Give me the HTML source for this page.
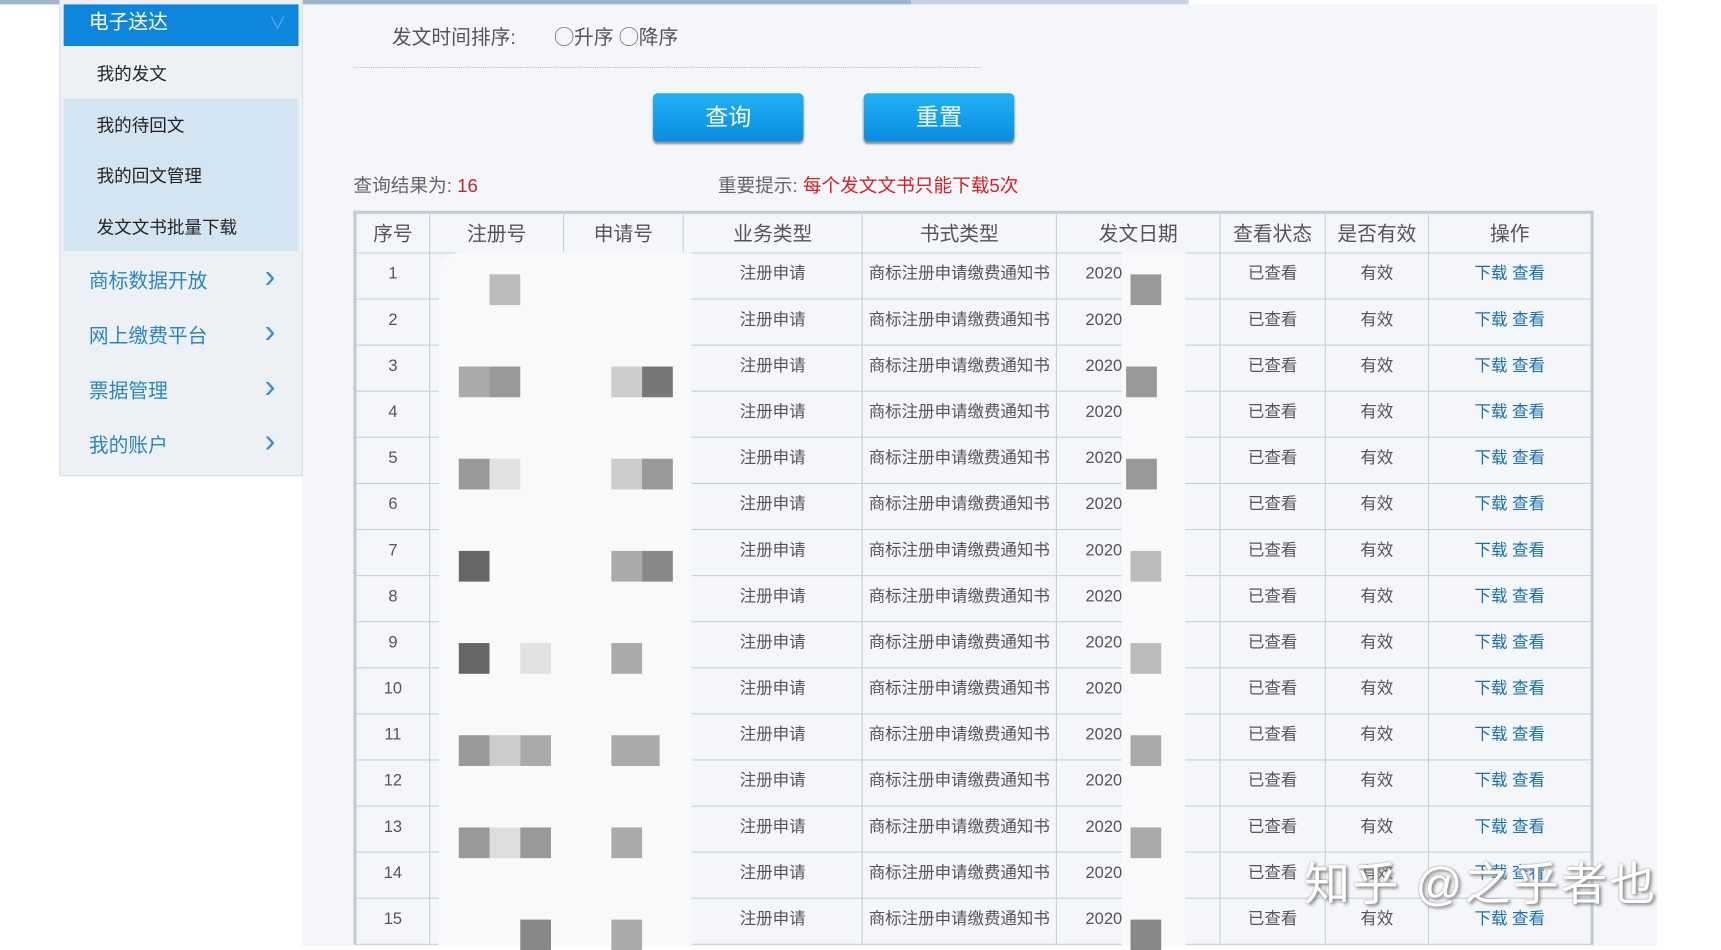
<!DOCTYPE html>
<html><head><meta charset="utf-8"><style>
body{margin:0;width:1721px;height:946px;overflow:hidden;background:#fff;font-family:"Liberation Sans","Noto Sans CJK SC",sans-serif;}
#w{position:absolute;left:0;top:0;width:1568px;height:862px;transform:scale(1.09758,1.0974);transform-origin:0 0;}
.a{position:absolute;}
.side{left:54px;top:0;width:220px;height:433px;background:#edf1f6;border:1px solid #d8dde4;border-top:none;}
.nav{position:absolute;left:26px;font-size:18px;color:#2a86c0;}
.chev{position:absolute;left:186px;font-size:30px;line-height:30px;color:#3a8fd0;}
.sub{position:absolute;left:33px;font-size:16px;color:#222;}
table{border-collapse:collapse;table-layout:fixed;font-size:15px;color:#555;}
td,th{border:1px solid #c9cfdc;text-align:center;padding:0;}
th{height:33px;font-weight:normal;font-size:18px;color:#555;padding-bottom:2px;}
td{height:40px;padding-bottom:1px;vertical-align:top;line-height:38px;}
.op{color:#1a6fae;}
.btn{position:absolute;top:85px;width:137px;height:44px;border-radius:4px;background:linear-gradient(#1fb2f4,#0b8ce0);box-shadow:0 2px 2px #888;color:#fff;font-size:21px;text-align:center;line-height:46px;}
.g{position:absolute;width:28px;height:28px;}
</style></head><body><div id="w">
<div class="a" style="left:0;top:0;width:1083px;height:4px;background:#c7d3e0"></div>
<div class="a" style="left:0;top:0;width:830px;height:4px;background:#9fb4cb"></div>
<div class="a" style="left:275px;top:4px;width:1235px;height:858px;background:#f4f6f9"></div>
<div class="a side">
 <div class="a" style="left:3px;top:4px;width:214px;height:38px;background:#0f86de"></div>
 <div class="a" style="left:26px;top:6px;font-size:18px;color:#fff">电子送达</div>
 <div class="a" style="left:190px;top:8px;font-size:16px;color:#5aa8e8">∨</div>
 <div class="sub" style="top:54px">我的发文</div>
 <div class="a" style="left:3px;top:90px;width:214px;height:139px;background:#d3e4f2"></div>
 <div class="sub" style="top:101px">我的待回文</div>
 <div class="sub" style="top:147px">我的回文管理</div>
 <div class="sub" style="top:194px">发文文书批量下载</div>
 <div class="nav" style="top:242px">商标数据开放</div><div class="chev" style="top:238px">›</div>
 <div class="nav" style="top:292px">网上缴费平台</div><div class="chev" style="top:288px">›</div>
 <div class="nav" style="top:342px">票据管理</div><div class="chev" style="top:338px">›</div>
 <div class="nav" style="top:392px">我的账户</div><div class="chev" style="top:388px">›</div>
</div>
<div class="a" style="left:357px;top:20px;font-size:18px;color:#555">发文时间排序:</div>
<div class="a" style="left:505px;top:20px;font-size:18px;color:#555">◯升序 ◯降序</div>
<div class="a" style="left:322px;top:61px;width:571px;border-top:1px dotted #bbb"></div>
<div class="btn" style="left:595px">查询</div>
<div class="btn" style="left:787px">重置</div>
<div class="a" style="left:322px;top:155px;font-size:17px;color:#666">查询结果为: <span style="color:#c0262d">16</span></div>
<div class="a" style="left:654px;top:155px;font-size:17px;color:#666">重要提示: <span style="color:#d4202a">每个发文文书只能下载5次</span></div>
<div class="a" style="left:322px;top:192px;border:2px solid #c3cad6;border-bottom:none">
<table style="width:1126px">
<colgroup><col style="width:67px"><col style="width:122px"><col style="width:109px"><col style="width:163px"><col style="width:177px"><col style="width:149px"><col style="width:96px"><col style="width:94px"><col></colgroup>
<tr><th>序号</th><th>注册号</th><th>申请号</th><th>业务类型</th><th>书式类型</th><th>发文日期</th><th>查看状态</th><th>是否有效</th><th>操作</th></tr>
<tr><td>1</td><td></td><td></td><td>注册申请</td><td>商标注册申请缴费通知书</td><td style="text-align:left;padding-left:26px">2020</td><td>已查看</td><td>有效</td><td class="op">下载 查看</td></tr>
<tr><td>2</td><td></td><td></td><td>注册申请</td><td>商标注册申请缴费通知书</td><td style="text-align:left;padding-left:26px">2020</td><td>已查看</td><td>有效</td><td class="op">下载 查看</td></tr>
<tr><td>3</td><td></td><td></td><td>注册申请</td><td>商标注册申请缴费通知书</td><td style="text-align:left;padding-left:26px">2020</td><td>已查看</td><td>有效</td><td class="op">下载 查看</td></tr>
<tr><td>4</td><td></td><td></td><td>注册申请</td><td>商标注册申请缴费通知书</td><td style="text-align:left;padding-left:26px">2020</td><td>已查看</td><td>有效</td><td class="op">下载 查看</td></tr>
<tr><td>5</td><td></td><td></td><td>注册申请</td><td>商标注册申请缴费通知书</td><td style="text-align:left;padding-left:26px">2020</td><td>已查看</td><td>有效</td><td class="op">下载 查看</td></tr>
<tr><td>6</td><td></td><td></td><td>注册申请</td><td>商标注册申请缴费通知书</td><td style="text-align:left;padding-left:26px">2020</td><td>已查看</td><td>有效</td><td class="op">下载 查看</td></tr>
<tr><td>7</td><td></td><td></td><td>注册申请</td><td>商标注册申请缴费通知书</td><td style="text-align:left;padding-left:26px">2020</td><td>已查看</td><td>有效</td><td class="op">下载 查看</td></tr>
<tr><td>8</td><td></td><td></td><td>注册申请</td><td>商标注册申请缴费通知书</td><td style="text-align:left;padding-left:26px">2020</td><td>已查看</td><td>有效</td><td class="op">下载 查看</td></tr>
<tr><td>9</td><td></td><td></td><td>注册申请</td><td>商标注册申请缴费通知书</td><td style="text-align:left;padding-left:26px">2020</td><td>已查看</td><td>有效</td><td class="op">下载 查看</td></tr>
<tr><td>10</td><td></td><td></td><td>注册申请</td><td>商标注册申请缴费通知书</td><td style="text-align:left;padding-left:26px">2020</td><td>已查看</td><td>有效</td><td class="op">下载 查看</td></tr>
<tr><td>11</td><td></td><td></td><td>注册申请</td><td>商标注册申请缴费通知书</td><td style="text-align:left;padding-left:26px">2020</td><td>已查看</td><td>有效</td><td class="op">下载 查看</td></tr>
<tr><td>12</td><td></td><td></td><td>注册申请</td><td>商标注册申请缴费通知书</td><td style="text-align:left;padding-left:26px">2020</td><td>已查看</td><td>有效</td><td class="op">下载 查看</td></tr>
<tr><td>13</td><td></td><td></td><td>注册申请</td><td>商标注册申请缴费通知书</td><td style="text-align:left;padding-left:26px">2020</td><td>已查看</td><td>有效</td><td class="op">下载 查看</td></tr>
<tr><td>14</td><td></td><td></td><td>注册申请</td><td>商标注册申请缴费通知书</td><td style="text-align:left;padding-left:26px">2020</td><td>已查看</td><td>有效</td><td class="op">下载 查看</td></tr>
<tr><td>15</td><td></td><td></td><td>注册申请</td><td>商标注册申请缴费通知书</td><td style="text-align:left;padding-left:26px">2020</td><td>已查看</td><td>有效</td><td class="op">下载 查看</td></tr>
</table></div>
<div class="a" style="left:400px;top:230px;width:230px;height:632px;background:#f8f9fb;border-radius:20px 0 0 0"></div>
<div class="a" style="left:1022px;top:230px;width:58px;height:632px;background:#f8f9fb"></div>
<div class="g" style="left:446px;top:250px;background:#bbb"></div>
<div class="g" style="left:418px;top:334px;background:#aaa"></div><div class="g" style="left:446px;top:334px;background:#999"></div>
<div class="g" style="left:557px;top:334px;background:#ccc"></div><div class="g" style="left:585px;top:334px;background:#777"></div>
<div class="g" style="left:418px;top:418px;background:#999"></div><div class="g" style="left:446px;top:418px;background:#e2e2e2"></div>
<div class="g" style="left:557px;top:418px;background:#ccc"></div><div class="g" style="left:585px;top:418px;background:#999"></div>
<div class="g" style="left:418px;top:502px;background:#666"></div><div class="g" style="left:557px;top:502px;background:#aaa"></div><div class="g" style="left:585px;top:502px;background:#888"></div>
<div class="g" style="left:418px;top:586px;background:#666"></div><div class="g" style="left:474px;top:586px;background:#e2e2e2"></div><div class="g" style="left:557px;top:586px;background:#aaa"></div>
<div class="g" style="left:418px;top:670px;background:#999"></div><div class="g" style="left:446px;top:670px;background:#ccc"></div><div class="g" style="left:474px;top:670px;background:#aaa"></div><div class="g" style="left:557px;top:670px;width:44px;background:#aaa"></div>
<div class="g" style="left:418px;top:754px;background:#999"></div><div class="g" style="left:446px;top:754px;background:#ddd"></div><div class="g" style="left:474px;top:754px;background:#999"></div><div class="g" style="left:557px;top:754px;background:#aaa"></div>
<div class="g" style="left:474px;top:838px;background:#888"></div><div class="g" style="left:557px;top:838px;background:#aaa"></div>
<div class="g" style="left:1030px;top:250px;background:#999"></div><div class="g" style="left:1026px;top:334px;background:#999"></div>
<div class="g" style="left:1026px;top:418px;background:#999"></div><div class="g" style="left:1030px;top:502px;background:#bbb"></div>
<div class="g" style="left:1030px;top:586px;background:#bbb"></div><div class="g" style="left:1030px;top:670px;background:#aaa"></div>
<div class="g" style="left:1030px;top:754px;background:#aaa"></div><div class="g" style="left:1030px;top:838px;background:#888"></div>
<div class="a" style="left:1188px;top:772px;font-size:42px;color:#fff;text-shadow:2px 2px 3px #888,0 0 2px #999;letter-spacing:2px">知乎 @之乎者也</div>
</div></body></html>
